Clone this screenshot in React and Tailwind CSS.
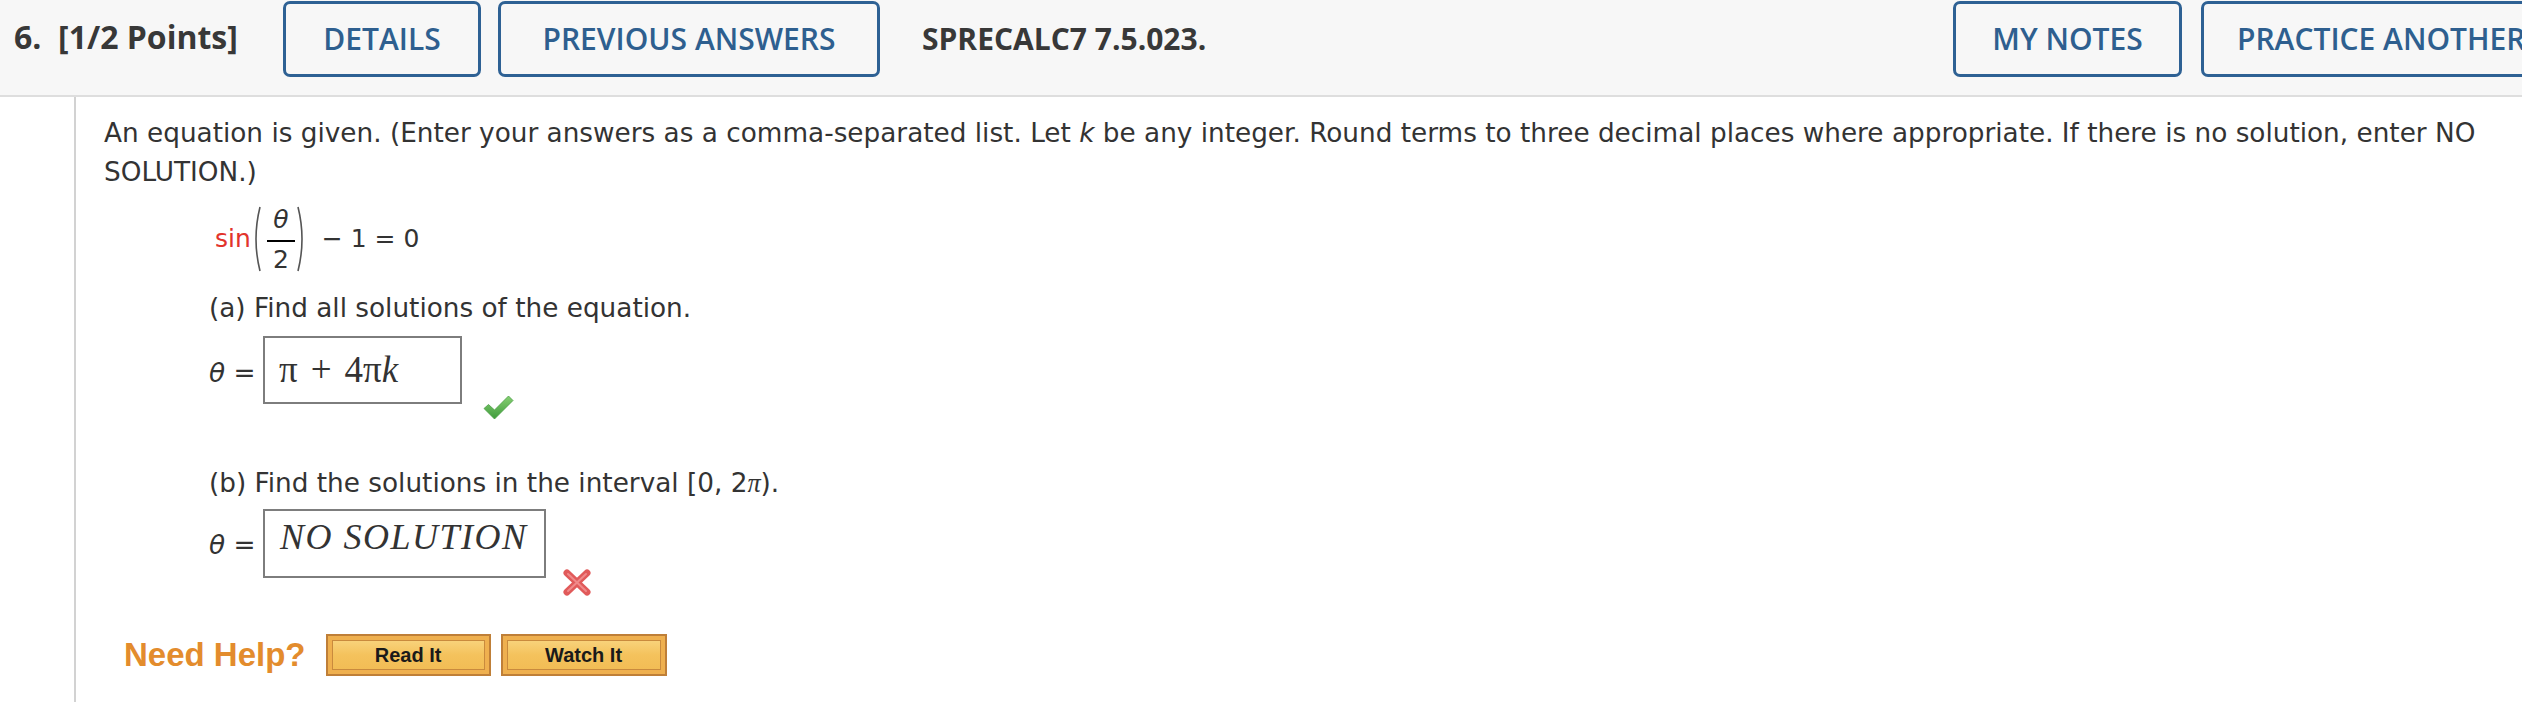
import React from "react";

function HeaderButton({ children, w, extra = "justify-center" }) {
  return (
    <div
      className={`${w} ${extra} h-[76px] shrink-0 border-[3px] border-[#2e6194] rounded-[7px] flex items-center text-[30px] leading-none font-semibold text-[#2e5f8f] font-['Open_Sans',sans-serif] whitespace-nowrap overflow-hidden`}
    >
      {children}
    </div>
  );
}

function Paren({ right }) {
  return (
    <svg width="10" height="66" viewBox="0 0 10 66" className="shrink-0">
      {right ? (
        <path d="M2 1 Q10 33 2 65" fill="none" stroke="#555" strokeWidth="1.6" />
      ) : (
        <path d="M8 1 Q0 33 8 65" fill="none" stroke="#555" strokeWidth="1.6" />
      )}
    </svg>
  );
}

function CheckMark() {
  return (
    <svg width="31" height="25" viewBox="0 0 31 25" className="shrink-0">
      <defs>
        <linearGradient id="chk" x1="0" y1="0" x2="0" y2="1">
          <stop offset="0" stopColor="#86cf72" />
          <stop offset="1" stopColor="#3f9b3c" />
        </linearGradient>
      </defs>
      <path d="M1 13.5 L5.5 9.5 L11.5 15 L25.5 1 L30 5.5 L11.5 24 Z" fill="url(#chk)" stroke="#4a9e44" strokeWidth="0.8" strokeLinejoin="round" />
    </svg>
  );
}

function CrossMark() {
  return (
    <svg width="30" height="29" viewBox="0 0 30 29" className="shrink-0">
      <g stroke="#e15a5a" strokeWidth="7" strokeLinecap="round">
        <line x1="5" y1="5" x2="25" y2="24" />
        <line x1="25" y1="5" x2="5" y2="24" />
      </g>
      <g stroke="#f08a8a" strokeWidth="2" strokeLinecap="round">
        <line x1="6" y1="6" x2="24" y2="23" />
        <line x1="24" y1="6" x2="6" y2="23" />
      </g>
    </svg>
  );
}

function HelpButton({ children, w }) {
  return (
    <div className={`${w} h-[42px] shrink-0 border-2 border-[#bf7f38] bg-[#efb04f] p-[4px]`}>
      <div className="h-full w-full border border-[#c98a3d] bg-gradient-to-b from-[#f8d27a] via-[#f4c25c] to-[#f2bd55] flex items-center justify-center text-[20px] leading-none font-bold text-[#1a1a1a] font-['Liberation_Sans',Arial,sans-serif]">
        {children}
      </div>
    </div>
  );
}

export default function App() {
  return (
    <div className="w-[2522px] h-[702px] overflow-hidden bg-white">
      {/* Header */}
      <div className="h-[97px] bg-[#f7f7f7] border-b-2 border-[#dedede] pt-[1px]">
        <div className="flex items-center h-[76px] whitespace-nowrap">
          <div className="w-[283px] shrink-0 pl-[14px] pb-[5px] text-[32px] leading-none font-bold text-[#383838] font-['Open_Sans',sans-serif]">
            6.&nbsp; [1/2 Points]
          </div>
          <HeaderButton w="w-[198px]">DETAILS</HeaderButton>
          <div className="w-[17px] shrink-0" />
          <HeaderButton w="w-[382px]">PREVIOUS ANSWERS</HeaderButton>
          <div className="w-[1073px] shrink-0 pl-[42px] text-[30px] leading-none font-bold text-[#383838] font-['Open_Sans',sans-serif]">
            SPRECALC7 7.5.023.
          </div>
          <HeaderButton w="w-[229px]">MY NOTES</HeaderButton>
          <div className="w-[19px] shrink-0" />
          <HeaderButton w="w-[420px]" extra="justify-start pl-[33px]">PRACTICE ANOTHER</HeaderButton>
        </div>
      </div>

      {/* Body */}
      <div className="flex h-[605px]">
        <div className="w-[76px] shrink-0 border-r-2 border-[#d2d2d2]" />
        <div className="flex-1 pl-[28px] pt-[17px] text-[26.3px] leading-[39px] text-[#333] font-['DejaVu_Sans',Verdana,sans-serif]">
          <p>
            An equation is given. (Enter your answers as a comma-separated list. Let <i>k</i> be any integer. Round terms to three decimal places where appropriate. If there is no solution, enter NO SOLUTION.)
          </p>

          {/* Equation */}
          <div className="flex items-center h-[68px] mt-[13px] ml-[111px] text-[25px] leading-[30px]">
            <span className="text-[#e2342c]">sin</span>
            <div className="ml-[1px]">
              <Paren />
            </div>
            <div className="ml-[5px] w-[28px] h-[68px] flex flex-col items-center pt-[2px]">
              <span className="leading-[26px] italic">θ</span>
              <div className="mt-[7px] h-[2px] w-[28px] bg-black" />
              <span className="mt-[5px] leading-[26px]">2</span>
            </div>
            <div className="ml-[1px]">
              <Paren right />
            </div>
            <span className="ml-[16px] whitespace-pre">− 1 = 0</span>
          </div>

          {/* Part a */}
          <p className="mt-[16px] ml-[105px]">(a) Find all solutions of the equation.</p>
          <div className="flex items-start h-[68px] mt-[8px] ml-[105px]">
            <div className="w-[54px] shrink-0 mt-[18px] whitespace-nowrap">
              <i>θ</i> =
            </div>
            <div className="w-[199px] h-[68px] shrink-0 border-2 border-[#7d7d7d] pl-[14px] pt-[13px] text-[37px] leading-none text-[#333] font-['Liberation_Serif','Times_New_Roman',serif] whitespace-nowrap">
              π<span className="mx-[13px]">+</span>4π<i>k</i>
            </div>
            <div className="ml-[21px] mt-[59px]">
              <CheckMark />
            </div>
          </div>

          {/* Part b */}
          <p className="mt-[60px] ml-[105px]">
            (b) Find the solutions in the interval [0, 2<i className="font-['Liberation_Serif',serif]">π</i>).
          </p>
          <div className="flex items-start h-[69px] mt-[6px] ml-[105px]">
            <div className="w-[54px] shrink-0 mt-[17px] whitespace-nowrap">
              <i>θ</i> =
            </div>
            <div className="w-[283px] h-[69px] shrink-0 border-2 border-[#7d7d7d] pl-[15px] pt-[8px] text-[36px] leading-none italic tracking-[1.5px] text-[#333] font-['Liberation_Serif','Times_New_Roman',serif] whitespace-nowrap">
              NO SOLUTION
            </div>
            <div className="ml-[16px] mt-[59px]">
              <CrossMark />
            </div>
          </div>

          {/* Need help */}
          <div className="flex items-center h-[42px] mt-[56px] ml-[20px]">
            <span className="text-[33px] leading-[42px] font-bold text-[#e38c2d] font-['Liberation_Sans',Arial,sans-serif] whitespace-nowrap">
              Need Help?
            </span>
            <div className="ml-[20px]">
              <HelpButton w="w-[165px]">Read It</HelpButton>
            </div>
            <div className="ml-[10px]">
              <HelpButton w="w-[166px]">Watch It</HelpButton>
            </div>
          </div>
        </div>
      </div>
    </div>
  );
}
